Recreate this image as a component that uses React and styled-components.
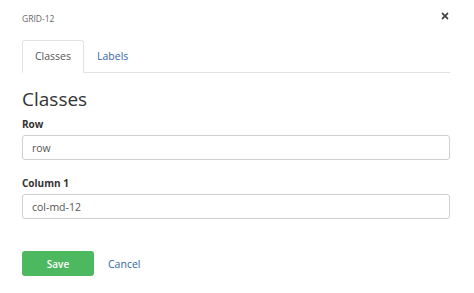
import React, { useState } from "react";
import styled, { createGlobalStyle } from "styled-components";
import { FaTimes } from "react-icons/fa";

const GlobalStyle = createGlobalStyle`
  body {
    margin: 0;
    background: #fff;
    font-family: "Open Sans", "DejaVu Sans", sans-serif;
    color: #333;
  }
`;

const Modal = styled.div`
  padding: 10px 24px 0 22px;
`;

const Header = styled.div`
  display: flex;
  justify-content: space-between;
  align-items: center;
  height: 16px;
`;

const Title = styled.div`
  font-size: 8.5px;
  color: #666;
`;

const CloseButton = styled.button`
  border: none;
  background: none;
  padding: 0;
  margin-top: -4px;
  color: #444;
  display: flex;
  cursor: pointer;
`;

const TabList = styled.div`
  display: flex;
  margin-top: 14px;
  border-bottom: 1px solid #e2e2e2;
  height: 32px;
`;

const Tab = styled.button`
  font-family: inherit;
  font-size: 10.5px;
  height: 33px;
  padding: 0 12px 2px 12px;
  margin-bottom: -1px;
  background: ${(p) => (p.$active ? "#fff" : "transparent")};
  color: ${(p) => (p.$active ? "#555" : "#3466a8")};
  border: 1px solid ${(p) => (p.$active ? "#e2e2e2" : "transparent")};
  border-bottom-color: ${(p) => (p.$active ? "#fff" : "transparent")};
  border-radius: 3px 3px 0 0;
  cursor: pointer;
`;

const Heading = styled.h2`
  font-size: 19px;
  font-weight: 400;
  line-height: 26px;
  margin: 13px 0 0;
  color: #333;
`;

const Label = styled.label`
  display: block;
  font-size: 10px;
  font-weight: 700;
  line-height: 14px;
  margin-top: ${(p) => p.$top}px;
  margin-bottom: 4px;
  color: #333;
`;

const Input = styled.input`
  display: block;
  box-sizing: border-box;
  width: 100%;
  height: 25px;
  padding: 0 9px;
  font-family: inherit;
  font-size: 10.5px;
  color: #555;
  border: 1px solid #cfcfcf;
  border-radius: 3px;
  outline: none;
`;

const Actions = styled.div`
  display: flex;
  align-items: center;
  gap: 14px;
  margin-top: 32px;
`;

const SaveButton = styled.button`
  width: 72px;
  height: 25px;
  border: none;
  border-radius: 3px;
  background: #4cb860;
  color: #fff;
  font-family: inherit;
  font-size: 10px;
  font-weight: 600;
  cursor: pointer;
`;

const CancelLink = styled.a`
  font-size: 10.5px;
  color: #3466a8;
  text-decoration: none;
  cursor: pointer;
`;

const App = () => {
  const [tab, setTab] = useState("classes");
  const [row, setRow] = useState("row");
  const [col, setCol] = useState("col-md-12");

  return (
    <Modal>
      <GlobalStyle />
      <Header>
        <Title>GRID-12</Title>
        <CloseButton aria-label="Close">
          <FaTimes size={10} />
        </CloseButton>
      </Header>

      <TabList>
        <Tab $active={tab === "classes"} onClick={() => setTab("classes")}>
          Classes
        </Tab>
        <Tab $active={tab === "labels"} onClick={() => setTab("labels")}>
          Labels
        </Tab>
      </TabList>

      <Heading>Classes</Heading>

      <Label $top={5} htmlFor="row">
        Row
      </Label>
      <Input id="row" value={row} onChange={(e) => setRow(e.target.value)} />

      <Label $top={16} htmlFor="col1">
        Column 1
      </Label>
      <Input id="col1" value={col} onChange={(e) => setCol(e.target.value)} />

      <Actions>
        <SaveButton>Save</SaveButton>
        <CancelLink>Cancel</CancelLink>
      </Actions>
    </Modal>
  );
};

export default App;
